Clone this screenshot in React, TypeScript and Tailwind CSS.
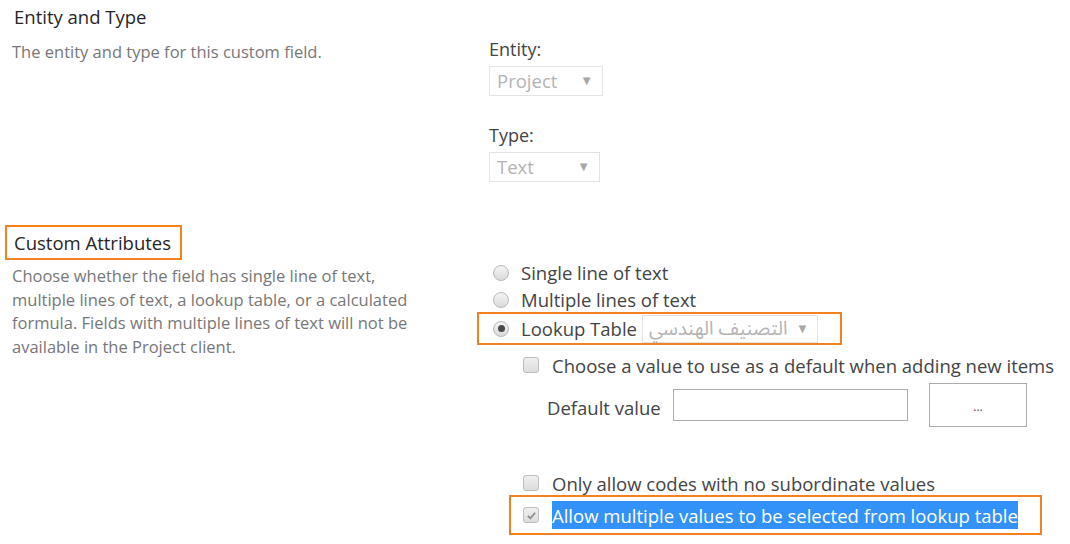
import React from 'react';

/* ─── Small form bits ─── */
function Radio({ checked }: { checked?: boolean }) {
  return (
    <span className="w-[16px] h-[16px] rounded-full border border-[#b9b9b9] bg-gradient-to-b from-[#f4f4f4] to-[#dadada] flex items-center justify-center flex-shrink-0">
      {checked && <span className="w-[7px] h-[7px] rounded-full bg-[#4a4a4a]" />}
    </span>
  );
}

function Checkbox({ checked }: { checked?: boolean }) {
  return (
    <span className="w-[16px] h-[16px] rounded-[3px] border border-[#bdbdbd] bg-gradient-to-b from-[#f0f0f0] to-[#dcdcdc] flex items-center justify-center flex-shrink-0">
      {checked && (
        <svg width="11" height="11" viewBox="0 0 12 12">
          <path d="M2 6.5 L4.8 9 L10 3" fill="none" stroke="#8c8c8c" strokeWidth="2" />
        </svg>
      )}
    </span>
  );
}

function DisabledSelect({ value, width }: { value: string; width: string }) {
  return (
    <div className={`${width} h-[30px] border border-[#e3e3e3] flex items-center justify-between pl-[7px] pr-[9px]`}>
      <span className="text-[18.5px] leading-[24px] text-[#b4b4b4]">{value}</span>
      <span className="text-[13px] text-[#a8a8a8]">▼</span>
    </div>
  );
}

export default function App() {
  return (
    <div className="w-[1070px] h-[544px] bg-white overflow-hidden font-['Open_Sans',sans-serif]">
      {/* ── Entity and Type ── */}
      <div className="flex h-[225px]">
        <div className="w-[489px] pl-[12px]">
          <h2 className="pl-[2px] pt-[4px] text-[18.5px] leading-[25px] text-[#262626]">Entity and Type</h2>
          <p className="mt-[12px] text-[16.5px] leading-[22px] text-[#777777]">The entity and type for this custom field.</p>
        </div>
        <div className="flex-1 pt-[37px]">
          <p className="text-[18px] leading-[24px] text-[#444444]">Entity:</p>
          <div className="mt-[5px]">
            <DisabledSelect value="Project" width="w-[114px]" />
          </div>
          <p className="mt-[27px] text-[18px] leading-[24px] text-[#444444]">Type:</p>
          <div className="mt-[5px]">
            <DisabledSelect value="Text" width="w-[111px]" />
          </div>
        </div>
      </div>

      {/* ── Custom Attributes ── */}
      <div className="flex">
        <div className="w-[477px]">
          <div className="ml-[5px] w-[177px] h-[35px] border-2 border-[#f5801f] flex items-center pl-[7px]">
            <h2 className="text-[18.5px] leading-[25px] text-[#262626] whitespace-nowrap">Custom Attributes</h2>
          </div>
          <p className="ml-[12px] mt-[4px] w-[412px] text-[16.5px] leading-[23.5px] text-[#777777]">
            Choose whether the field has single line of text, multiple lines of text, a lookup table, or a calculated
            formula. Fields with multiple lines of text will not be available in the Project client.
          </p>
        </div>

        <div className="flex-1 pt-[33px]">
          <div className="h-[29px] flex items-center gap-[12px] pl-[16px]">
            <Radio />
            <span className="text-[18.5px] leading-[25px] text-[#444444]">Single line of text</span>
          </div>
          <div className="h-[25px] flex items-center gap-[12px] pl-[16px]">
            <Radio />
            <span className="text-[18.5px] leading-[25px] text-[#444444]">Multiple lines of text</span>
          </div>
          <div className="w-[365px] h-[33px] border-2 border-[#f5801f] flex items-center pl-[14px]">
            <Radio checked />
            <span className="ml-[12px] text-[18.5px] leading-[25px] text-[#444444] whitespace-nowrap">Lookup Table</span>
            <div className="ml-[5px] w-[176px] h-[28px] border border-[#e3e3e3] flex items-center justify-between pl-[6px] pr-[8px]">
              <span
                dir="rtl"
                className="text-[19px] leading-[24px] text-[#b4b4b4] font-['Noto_Sans_Arabic','DejaVu_Sans',sans-serif]"
              >
                التصنيف الهندسي
              </span>
              <span className="text-[13px] text-[#a8a8a8]">▼</span>
            </div>
          </div>

          <div className="mt-[7px] h-[26px] flex items-center gap-[13px] pl-[46px]">
            <Checkbox />
            <span className="text-[18.5px] leading-[25px] text-[#444444] whitespace-nowrap">
              Choose a value to use as a default when adding new items
            </span>
          </div>
          <div className="mt-[5px] h-[44px] flex items-center pl-[70px]">
            <span className="w-[126px] text-[18.5px] leading-[25px] text-[#444444] pt-[4px] whitespace-nowrap">Default value</span>
            <div className="w-[235px] h-[32px] border border-[#ababab]" />
            <button className="ml-[21px] w-[98px] h-[44px] border border-[#ababab] bg-white text-[12px] text-[#444444] pt-[4px]">
              ...
            </button>
          </div>

          <div className="mt-[44px] h-[24px] flex items-center gap-[13px] pl-[46px]">
            <Checkbox />
            <span className="text-[18.5px] leading-[25px] text-[#444444] whitespace-nowrap">Only allow codes with no subordinate values</span>
          </div>
          <div className="w-[533px] h-[40px] ml-[32px] border-2 border-[#f5801f] flex items-center pl-[12px]">
            <Checkbox checked />
            <span className="ml-[13px] h-[28px] flex items-center bg-[#3392fa] text-[18.5px] leading-[25px] text-white whitespace-nowrap">
              Allow multiple values to be selected from lookup table
            </span>
          </div>
        </div>
      </div>
    </div>
  );
}
